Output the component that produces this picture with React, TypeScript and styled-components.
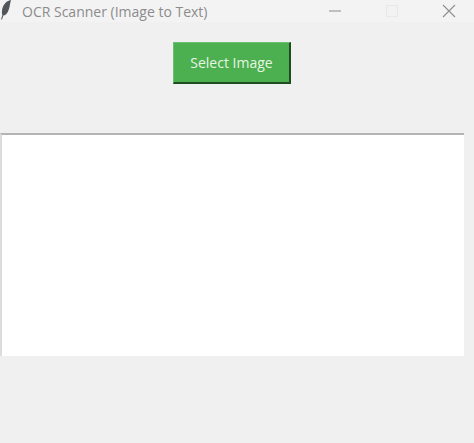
import styled, { createGlobalStyle } from "styled-components";

const GlobalStyle = createGlobalStyle`
  html, body {
    margin: 0;
    padding: 0;
    background: #f0f0f0;
  }
`;

const Window = styled.div`
  width: 474px;
  height: 443px;
  overflow: hidden;
  background: #f0f0f0;
  display: flex;
  flex-direction: column;
  font-family: "Open Sans", "Noto Sans", sans-serif;
`;

const TitleBar = styled.div`
  height: 22px;
  display: flex;
  align-items: center;
  background: #f3f3f3;
`;

const AppIcon = styled.svg`
  width: 14px;
  height: 20px;
  margin: 0 0 2px 0;
  flex: none;
`;

const Title = styled.span`
  margin-left: 8px;
  font-size: 14px;
  color: #8c8c8c;
  white-space: nowrap;
`;

const WindowControls = styled.div`
  margin-left: auto;
  display: flex;
  align-items: center;
  padding-right: 17px;
  gap: 41px;
`;

const ControlIcon = styled.svg`
  width: 16px;
  height: 16px;
  flex: none;
`;

const ButtonRow = styled.div`
  display: flex;
  justify-content: center;
  padding: 20px 10px 0 0;
  height: 111px;
  box-sizing: border-box;
`;

const SelectButton = styled.button`
  width: 118px;
  height: 42px;
  box-sizing: border-box;
  border: none;
  border-right: 2px solid #1f4d22;
  border-bottom: 2px solid #1f4d22;
  border-top: 1px solid #6cc070;
  border-left: 1px solid #6cc070;
  background: #4caf50;
  color: #e6f6e2;
  font-family: inherit;
  font-size: 14px;
  padding: 0;
`;

const TextPanel = styled.div`
  width: 464px;
  height: 223px;
  box-sizing: border-box;
  background: #ffffff;
  border-top: 2px solid #b4b4b4;
  border-left: 2px solid #dcdcdc;
`;

const App = () => {
  return (
    <Window>
      <GlobalStyle />
      <TitleBar>
        <AppIcon viewBox="0 0 14 20">
          <path d="M11 0 C 6 1, 2.5 5, 2 11 C 1.8 13, 2 14, 2.4 15 L 1 19.5 L 2 19.5 L 3.4 15.6 C 7 15, 9 10, 9.6 6.5 C 10 4, 10.5 2, 11 0 Z" fill="#50565a" />
        </AppIcon>
        <Title>OCR Scanner (Image to Text)</Title>
        <WindowControls>
          <ControlIcon viewBox="0 0 16 16">
            <path d="M2 8 H14" stroke="#a8a8a8" strokeWidth="1.4" fill="none" />
          </ControlIcon>
          <ControlIcon viewBox="0 0 16 16">
            <rect x="2.5" y="2.5" width="11" height="11" stroke="#e8e8e8" strokeWidth="1.2" fill="none" />
          </ControlIcon>
          <ControlIcon viewBox="0 0 16 16">
            <path d="M2 2 L14 14 M14 2 L2 14" stroke="#8e8e8e" strokeWidth="1.1" fill="none" />
          </ControlIcon>
        </WindowControls>
      </TitleBar>
      <ButtonRow>
        <SelectButton>Select Image</SelectButton>
      </ButtonRow>
      <TextPanel />
    </Window>
  );
};

export default App;
